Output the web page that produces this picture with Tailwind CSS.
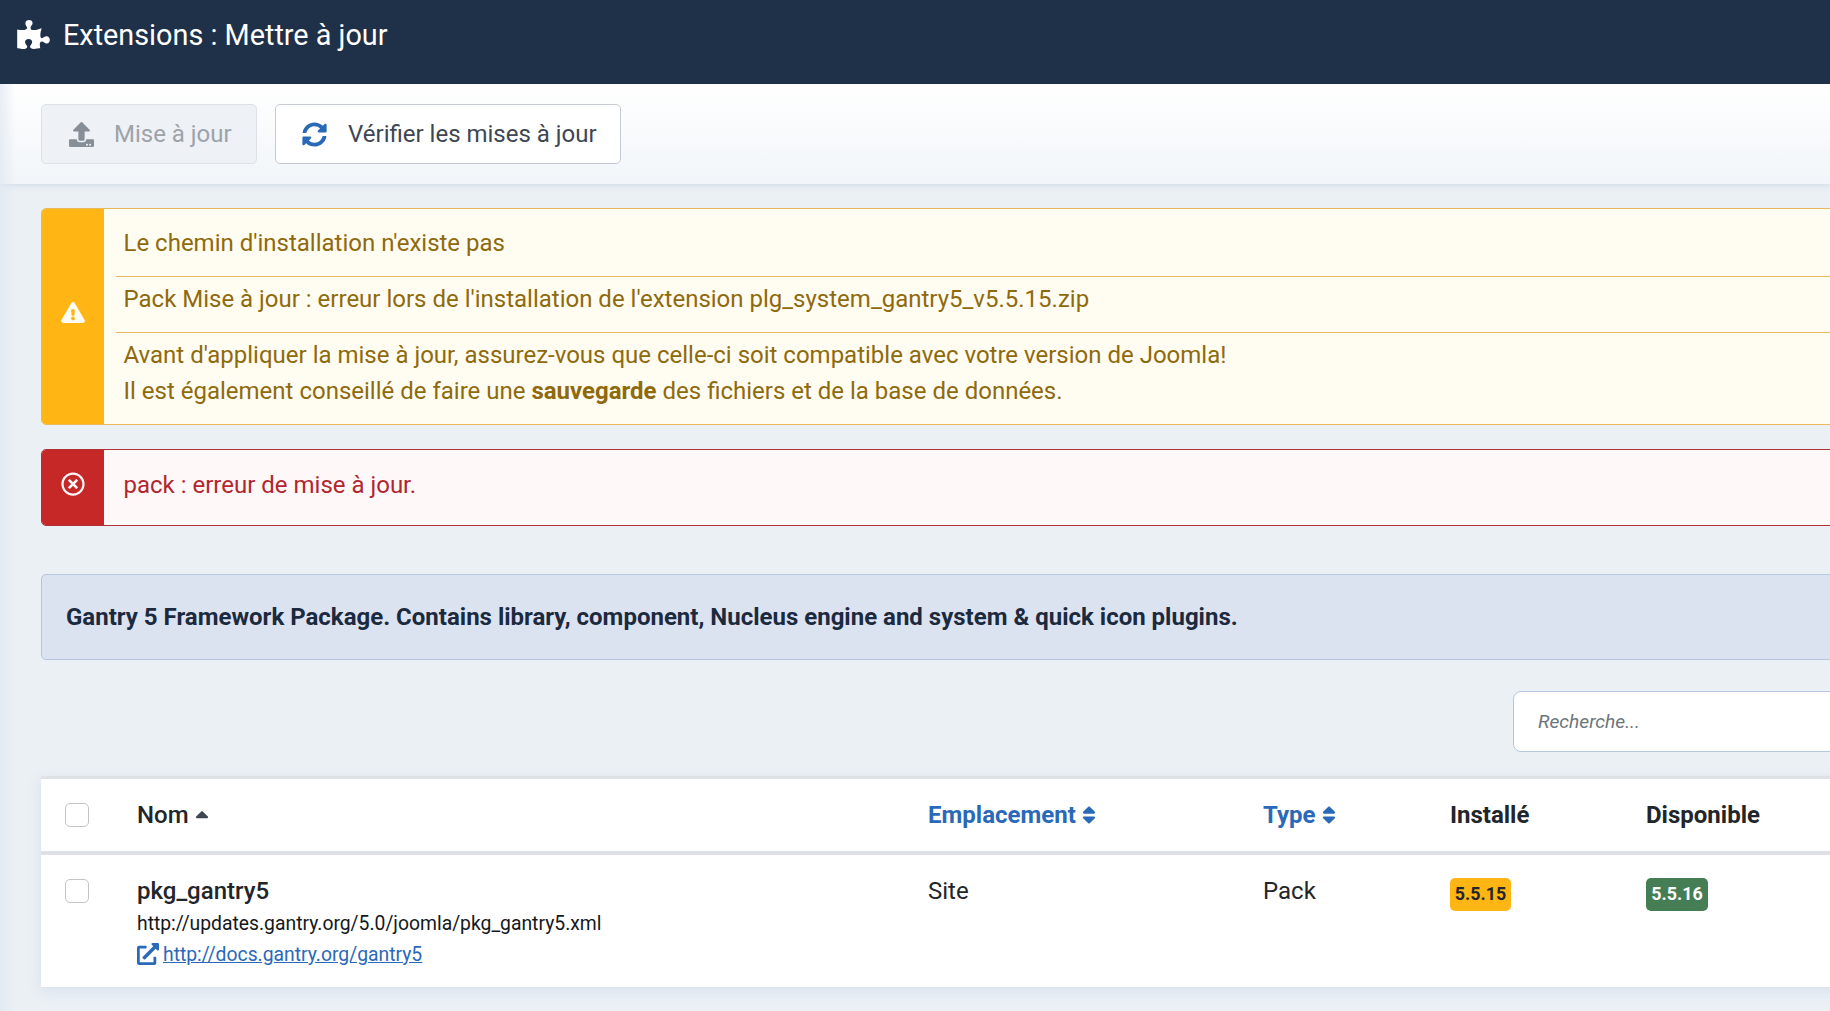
<!DOCTYPE html>
<html lang="fr">

<head>
    <meta charset="UTF-8">
    <meta name="viewport" content="width=device-width, initial-scale=1.0">
    <title>Extensions : Mettre à jour</title>
    <script src="https://cdn.jsdelivr.net/npm/@tailwindcss/browser@4"></script>
</head>

<body class="bg-[#ebf0f5] font-['Roboto',sans-serif] text-[24px] leading-[36px] text-[#22262a] overflow-hidden h-screen relative">
    <!-- Header -->
    <header class="h-[84px] bg-[#1f3049] flex items-start pl-[17px] pt-[16px] text-white relative z-10">
        <svg class="w-[33px] h-[29px] mt-[4px] fill-white" viewBox="0 0 576 512"><path d="M519.442 288.651c-41.519 0-59.5 31.593-82.058 31.593C377.409 320.244 432 144 432 144s-196.288 80-196.288-3.297c0-35.827 36.288-46.25 36.288-85.985C272 19.216 243.885 0 210.539 0c-34.654 0-66.366 18.891-66.366 56.346 0 41.364 31.711 59.277 31.711 81.75C175.885 207.719 0 166.758 0 166.758v333.237s178.635 41.047 178.635-28.662c0-22.473-40-40.107-40-81.471 0-37.456 29.25-56.346 63.577-56.346 33.673 0 61.788 19.216 61.788 54.717 0 39.735-36.288 50.158-36.288 85.985 0 60.803 129.675 25.73 181.23 25.73 0 0-34.725-120.101 25.827-120.101 35.962 0 46.423 36.152 86.308 36.152C556.712 416 576 387.99 576 354.443c0-34.199-18.962-65.792-56.558-65.792z"/></svg>
        <h1 class="ml-[13px] text-[28.8px] leading-[38px]">Extensions : Mettre à jour</h1>
    </header>

    <!-- Toolbar -->
    <div class="h-[100px] bg-linear-to-b from-white to-[#f1f5f9] shadow-[0_1px_6px_rgba(160,180,210,0.4)] pl-[41px] pt-[20px] flex gap-[18px] relative">
        <button class="h-[60px] w-[216px] flex items-center pl-[27px] border border-[#dde1e7] rounded-[5px] bg-[#eef1f5] text-[#9da3aa]">
            <svg class="w-[25px] h-[25px] fill-[#868e98]" viewBox="0 0 512 512"><path d="M296 384h-80c-13.3 0-24-10.7-24-24V192h-87.7c-17.8 0-26.7-21.5-14.1-34.1L242.3 5.7c7.5-7.5 19.8-7.5 27.3 0l152.2 152.2c12.6 12.6 3.7 34.1-14.1 34.1H320v168c0 13.3-10.7 24-24 24zm216-8v112c0 13.3-10.7 24-24 24H24c-13.3 0-24-10.7-24-24V376c0-13.3 10.7-24 24-24h136v8c0 30.9 25.1 56 56 56h80c30.9 0 56-25.1 56-56v-8h136c13.3 0 24 10.7 24 24zm-124 88c0-11-9-20-20-20s-20 9-20 20 9 20 20 20 20-9 20-20zm64 0c0-11-9-20-20-20s-20 9-20 20 9 20 20 20 20-9 20-20z"/></svg>
            <span class="ml-[20px]">Mise à jour</span>
        </button>
        <button class="h-[60px] w-[346px] flex items-center pl-[26px] border border-[#c5cad3] rounded-[5px] bg-white text-[#3e4652]">
            <svg class="w-[25px] h-[25px] fill-[#2a69b8]" viewBox="0 0 512 512"><path d="M370.72 133.28C339.458 104.008 298.888 87.962 255.848 88c-77.458.068-144.328 53.178-162.791 126.85-1.344 5.363-6.122 9.15-11.651 9.15H24.103c-7.498 0-13.194-6.807-11.807-14.176C33.933 94.924 134.813 8 256 8c66.448 0 126.791 26.136 171.315 68.685L463.03 40.97C478.149 25.851 504 36.559 504 57.941V192c0 13.255-10.745 24-24 24H345.941c-21.382 0-32.09-25.851-16.971-40.971l41.75-41.749zM32 296h134.059c21.382 0 32.09 25.851 16.971 40.971l-41.75 41.75c31.262 29.273 71.835 45.319 114.876 45.28 77.418-.07 144.315-53.144 162.787-126.849 1.344-5.363 6.122-9.15 11.651-9.15h57.304c7.498 0 13.194 6.807 11.807 14.176C478.067 417.076 377.187 504 256 504c-66.448 0-126.791-26.136-171.315-68.685L48.97 471.03C33.851 486.149 8 475.441 8 454.059V320c0-13.255 10.745-24 24-24z"/></svg>
            <span class="ml-[21px]">Vérifier les mises à jour</span>
        </button>
    </div>

    <main class="pl-[41px] -mr-[20px]">
        <!-- Warning alert -->
        <div class="mt-[24px] h-[217px] flex border border-[#e9b85b] rounded-[5px] bg-[#fffcf2] text-[#8f6a0c] overflow-hidden">
            <div class="w-[63px] -my-px -ml-px bg-[#ffb514] flex items-center justify-center shrink-0">
                <svg class="w-[24px] h-[21px] -mt-[8px] fill-[#fffcf3]" viewBox="0 0 576 512"><path d="M569.517 440.013C587.975 472.007 564.806 512 527.94 512H48.054c-36.937 0-59.999-40.055-41.577-71.987L246.423 24.314c18.467-32.009 64.72-31.951 83.154 0l239.94 415.699zM288 354c-25.405 0-46 20.595-46 46s20.595 46 46 46 46-20.595 46-46-20.595-46-46-46zm-43.673-165.346l7.418 136c.347 6.364 5.609 11.346 11.982 11.346h48.546c6.373 0 11.635-4.982 11.982-11.346l7.418-136c.375-6.874-5.098-12.654-11.982-12.654h-63.383c-6.884 0-12.356 5.78-11.981 12.654z"/></svg>
            </div>
            <div class="flex-1 pl-[12px]">
                <div class="h-[68px] pt-[16px] pl-[7.5px] border-b border-[#e9b85b]">Le chemin d'installation n'existe pas</div>
                <div class="h-[56px] pt-[4px] pl-[7.5px] border-b border-[#e9b85b]">Pack Mise à jour : erreur lors de l'installation de l'extension plg_system_gantry5_v5.5.15.zip</div>
                <div class="pt-[4px] pl-[7.5px]">Avant d'appliquer la mise à jour, assurez-vous que celle-ci soit compatible avec votre version de Joomla!<br>Il est également conseillé de faire une <strong class="font-bold">sauvegarde</strong> des fichiers et de la base de données.</div>
            </div>
        </div>

        <!-- Error alert -->
        <div class="mt-[24px] h-[77px] flex border border-[#b23038] rounded-[5px] bg-[#fff8f8] text-[#b2262f] overflow-hidden">
            <div class="w-[63px] -my-px -ml-px bg-[#c52827] flex items-center justify-center shrink-0">
                <svg class="w-[24px] h-[24px] -mt-[8px] fill-[#fef7f7]" viewBox="0 0 512 512"><path d="M256 8C119 8 8 119 8 256s111 248 248 248 248-111 248-248S393 8 256 8zm0 448c-110.5 0-200-89.5-200-200S145.5 56 256 56s200 89.5 200 200-89.5 200-200 200zm101.8-262.2L295.6 256l62.2 62.2c4.7 4.7 4.7 12.3 0 17l-22.6 22.6c-4.7 4.7-12.3 4.7-17 0L256 295.6l-62.2 62.2c-4.7 4.7-12.3 4.7-17 0l-22.6-22.6c-4.7-4.7-4.7-12.3 0-17l62.2-62.2-62.2-62.2c-4.7-4.7-4.7-12.3 0-17l22.6-22.6c4.7-4.7 12.3-4.7 17 0l62.2 62.2 62.2-62.2c4.7-4.7 12.3-4.7 17 0l22.6 22.6c4.7 4.7 4.7 12.3 0 17z"/></svg>
            </div>
            <div class="flex-1 pl-[19.5px] pt-[17px]">pack : erreur de mise à jour.</div>
        </div>

        <!-- Package description -->
        <div class="mt-[48px] h-[86px] flex items-center pl-[24px] border border-[#b5c6e0] rounded-[5px] bg-[#dce3f0] text-[#1c2a3f] font-bold">Gantry 5 Framework Package. Contains library, component, Nucleus engine and system &amp; quick icon plugins.</div>

        <!-- Search -->
        <div class="mt-[31px] pl-[1472px]">
            <div class="h-[61px] flex items-center pl-[24px] pt-[1px] border border-[#b5c6e0] rounded-[8px] bg-white italic text-[#6c757d] text-[19.2px]">Recherche...</div>
        </div>

        <!-- Table -->
        <div class="mt-[24px] bg-white shadow-[0_4px_12px_rgba(160,180,210,0.25)] border-t-[3px] border-[#dee2e6]">
            <table class="w-full table-fixed">
                <thead>
                    <tr class="h-[74px] border-b-[4px] border-[#dee2e6] text-left">
                        <th class="w-[96px] pl-[24px] font-medium"><span class="block w-[24px] h-[24px] border border-[#c4c4c4] rounded-[5px] bg-white"></span></th>
                        <th class="w-[791px] font-medium"><span class="inline-flex items-center gap-[6px]">Nom <svg class="w-[14px] h-[22px] fill-[#3e4652]" viewBox="0 0 320 512"><path d="M279 224H41c-21.4 0-32.1-25.9-17-41L143 64c9.4-9.4 24.6-9.4 33.9 0l119 119c15.2 15.1 4.5 41-16.9 41z" transform="translate(0 110)"/></svg></span></th>
                        <th class="w-[335px] font-bold text-[#2a69b8]"><span class="inline-flex items-center gap-[6px]">Emplacement <svg class="w-[14px] h-[22px] fill-[#2a69b8]" viewBox="0 0 320 512"><path d="M41 288h238c21.4 0 32.1 25.9 17 41L177 448c-9.4 9.4-24.6 9.4-33.9 0L24 329c-15.1-15.1-4.4-41 17-41zm255-105L177 64c-9.4-9.4-24.6-9.4-33.9 0L24 183c-15.1 15.1-4.4 41 17 41h238c21.4 0 32.1-25.9 17-41z"/></svg></span></th>
                        <th class="w-[187px] font-bold text-[#2a69b8]"><span class="inline-flex items-center gap-[6px]">Type <svg class="w-[14px] h-[22px] fill-[#2a69b8]" viewBox="0 0 320 512"><path d="M41 288h238c21.4 0 32.1 25.9 17 41L177 448c-9.4 9.4-24.6 9.4-33.9 0L24 329c-15.1-15.1-4.4-41 17-41zm255-105L177 64c-9.4-9.4-24.6-9.4-33.9 0L24 183c-15.1 15.1-4.4 41 17 41h238c21.4 0 32.1-25.9 17-41z"/></svg></span></th>
                        <th class="w-[196px] font-bold">Installé</th>
                        <th class="font-bold">Disponible</th>
                    </tr>
                </thead>
                <tbody>
                    <tr class="h-[134px] align-top">
                        <td class="pl-[24px] pt-[24px]"><span class="block w-[24px] h-[24px] border border-[#c4c4c4] rounded-[5px] bg-white"></span></td>
                        <td class="pt-[18px]">
                            <div class="font-medium">pkg_gantry5</div>
                            <div class="text-[19.32px] leading-[30px] font-normal text-[#14181c]">http://updates.gantry.org/5.0/joomla/pkg_gantry5.xml</div>
                            <div class="mt-[1px] text-[19.32px] leading-[30px] flex items-center text-[#2a69b8]">
                                <svg class="w-[22px] h-[22px] mr-[4px] -mt-[3px] fill-[#2a69b8]" viewBox="0 0 512 512"><path d="M432,320H400a16,16,0,0,0-16,16V448H64V128H208a16,16,0,0,0,16-16V80a16,16,0,0,0-16-16H48A48,48,0,0,0,0,112V464a48,48,0,0,0,48,48H400a48,48,0,0,0,48-48V336A16,16,0,0,0,432,320ZM488,0h-128c-21.37,0-32.05,25.91-17,41l35.73,35.73L135,320.37a24,24,0,0,0,0,34L157.67,377a24,24,0,0,0,34,0L435.28,133.32,471,169c15,15,41,4.5,41-17V24A24,24,0,0,0,488,0Z"/></svg>
                                <a class="underline">http://docs.gantry.org/gantry5</a>
                            </div>
                        </td>
                        <td class="pt-[18px]">Site</td>
                        <td class="pt-[18px]">Pack</td>
                        <td class="pt-[19px]"><span class="inline-flex items-center justify-center w-[61px] h-[33px] rounded-[5px] bg-[#ffb514] text-[#22262a] text-[17.9px] font-bold">5.5.15</span></td>
                        <td class="pt-[19px]"><span class="inline-flex items-center justify-center w-[62px] h-[33px] rounded-[5px] bg-[#457d54] text-white text-[17.9px] font-bold">5.5.16</span></td>
                    </tr>
                </tbody>
            </table>
        </div>
    </main>

    <!-- Soft shade of the collapsed sidebar -->
    <div class="absolute left-0 top-[84px] bottom-0 w-[16px] bg-linear-to-r from-[#dfe7f1]/70 to-transparent"></div>
</body>

</html>
